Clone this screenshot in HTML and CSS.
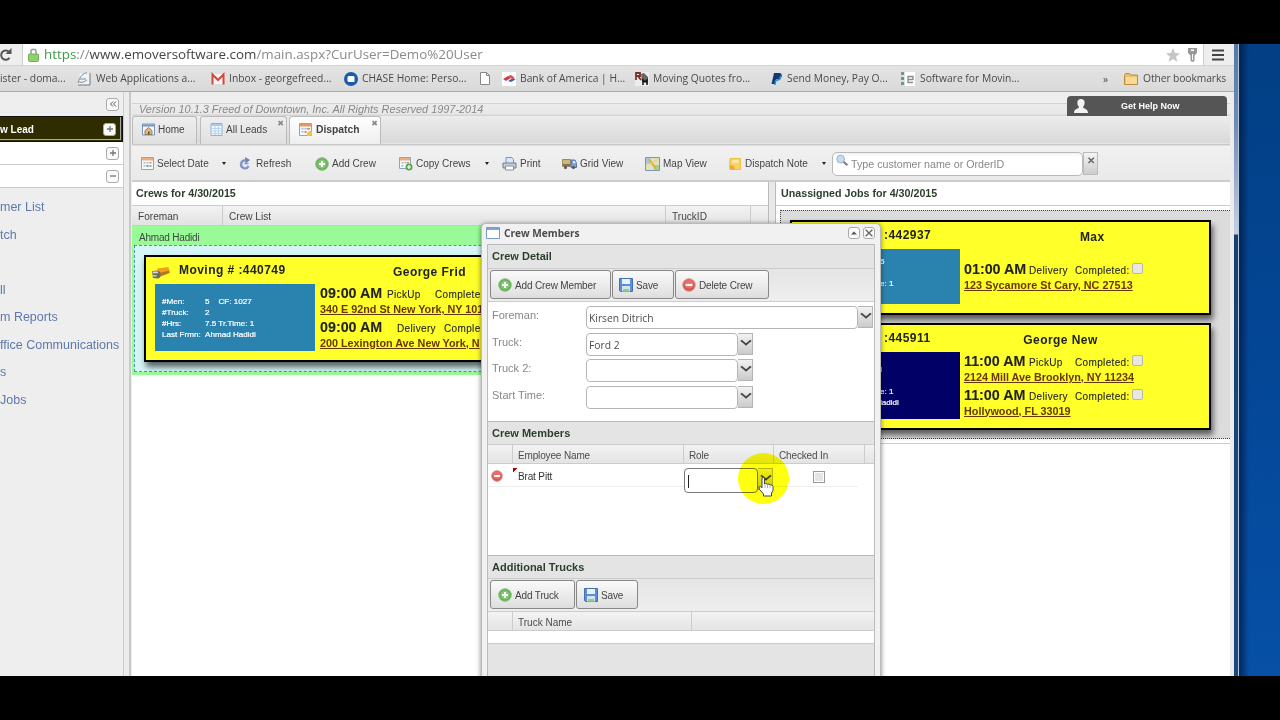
FILE: index.html
```html
<!DOCTYPE html>
<html>
<head>
	<meta charset="utf-8">
	<title>Dispatch</title>
	<link rel="stylesheet" href="styles.css">
</head>
<body>
<svg class="symbols">
	<symbol id="i-plus" viewBox="0 0 14 14"><circle cx="7" cy="7" r="6.3" fill="#62ad54" stroke="#8fc386"/><circle cx="7" cy="7" r="4.6" fill="#82c873"/><path d="M7 4v6M4 7h6" stroke="#fff" stroke-width="2"/></symbol>
	<symbol id="i-minus" viewBox="0 0 14 14"><circle cx="7" cy="7" r="6.3" fill="#d9534c" stroke="#e39a95"/><circle cx="7" cy="6" r="4.6" fill="#e5706a"/><path d="M3.6 7h6.8" stroke="#fff" stroke-width="2.2"/></symbol>
	<symbol id="i-disk" viewBox="0 0 14 14"><path d="M.5.5h13v13h-12l-1-1z" fill="#5d8fd6" stroke="#456fae"/><path d="M3 1h8v5H3z" fill="#e9f1fb"/><path d="M3 8h8v5.5H3z" fill="#d3e3f5"/><path d="M4 11h6v2H4z" fill="#8fd07c"/></symbol>
	<symbol id="i-cal" viewBox="0 0 13 13"><path d="M.5.5h12v12H.5z" fill="#f6f9fc" stroke="#8aa6c6"/><path d="M1 1h11v2.500H1z" fill="#e9ad7c"/><path d="M2.500 5h2v1.500h-2zM5.500 5h2v1.500h-2zM2.500 8h2v1.500h-2z" fill="#a3bad4"/><path d="M8.500 5h2v1.500h-2z" fill="#e08752"/><path d="M5.500 8h2v2h-2z" fill="#6aa963"/><path d="M8.500 8h2v2h-2z" fill="#8fb0d4"/></symbol>
	<symbol id="i-calplus" viewBox="0 0 14 14"><path d="M.5.5h11v11H.5z" fill="#f6f9fc" stroke="#8aa6c6"/><path d="M1 1h10v2.500H1z" fill="#e9ad7c"/><path d="M2.500 5h2v1.500h-2zM2.500 8h2v1.500h-2zM5.500 5h2v1.500h-2z" fill="#a3bad4"/><path d="M8 5h2v1.500H8z" fill="#e08752"/><circle cx="10" cy="10" r="3.500" fill="#58a64b"/><path d="M10 8v4M8 10h4" stroke="#fff" stroke-width="1.200"/></symbol>
	<symbol id="i-caledit" viewBox="0 0 13 13"><path d="M.5.5h12v12H.5z" fill="#f6f9fc" stroke="#8aa6c6"/><path d="M1 1h11v2.500H1z" fill="#e9965c"/><path d="M2.500 5h2v1.500h-2zM5.500 5h2v1.500h-2zM2.500 8h2v1.500h-2z" fill="#a3bad4"/><path d="M5.500 8h2v2h-2zM8 5h3v1.500H8z" fill="#d98a5a"/><path d="M8 10l2-2h3v4l-2 1H8z" fill="#f2c14c"/></symbol>
	<symbol id="i-home" viewBox="0 0 13 12"><path d="M.5.500h12v11H.5z" fill="#f4f6f9" stroke="#7a94b8"/><path d="M1 1h11v2H1z" fill="#7794bd"/><path d="M3 7l3.500-3L10 7v4H3z" fill="#d8b98b" stroke="#8a6a3f" stroke-width=".8"/><path d="M6 8h1.500v3H6z" fill="#5f4b30"/></symbol>
	<symbol id="i-table" viewBox="0 0 12 13"><path d="M.5.500h11v12H.5z" fill="#f3f8fd" stroke="#8fb0d6"/><path d="M1 1h10v2H1z" fill="#a9c8e8"/><path d="M1 5.500h10M1 8h10M1 10.500h10M4.500 1v11M8 1v11" stroke="#b5cfe8" stroke-width=".9"/></symbol>
	<symbol id="i-refresh" viewBox="0 0 12 13"><path d="M9.500 9A3.900 3.900 0 1 1 6.500 3.500" fill="none" stroke="#8595cb" stroke-width="2.400"/><path d="M6 0l5 3-4.500 3.500z" fill="#6b80bf"/><path d="M5.500 6.500h4" stroke="#8595cb" stroke-width="1.500"/></symbol>
	<symbol id="i-print" viewBox="0 0 15 14"><path d="M4 .5h6l1.500 2V7H4z" fill="#d9e9f8" stroke="#7698bd"/><path d="M1 6h13v5H1z" fill="#c9cdd5" stroke="#707b8c"/><path d="M3.500 9h8v4h-8z" fill="#fff" stroke="#8290a3"/></symbol>
	<symbol id="i-truck" viewBox="0 0 15 12"><path d="M.5 1.500h8v7h-8z" fill="#d0b777" stroke="#9c8a5f"/><path d="M1 6h7v2H1z" fill="#7d7262"/><path d="M9 2h4l1.500 3.500v4H9z" fill="#7d9fd2" stroke="#5674a8"/><path d="M11 3h2l.8 2.200H11z" fill="#dce9f7"/><circle cx="3.500" cy="9.500" r="1.500" fill="#555"/><circle cx="11.500" cy="9.500" r="1.500" fill="#555"/></symbol>
	<symbol id="i-map" viewBox="0 0 15 14"><path d="M.5.500h14v13H.5z" fill="#dfe3bd" stroke="#7a97b8"/><path d="M1 1h4v6H1z" fill="#a9c8de"/><path d="M9 8h5v5H9z" fill="#abcf8d"/><path d="M4 2l7 10" stroke="#e8ac2c" stroke-width="2"/><path d="M13 2L7 6" stroke="#e9d27a" stroke-width="1.500"/></symbol>
	<symbol id="i-note" viewBox="0 0 12 12"><path d="M1 .5h10.500v11H1l-.5-3z" fill="#f8d264" stroke="#ecc04a"/><path d="M1 7l4 1 1 3.500H1z" fill="#f0a93d"/><path d="M3 2h7v3H3z" fill="#fbe69c"/></symbol>
	<symbol id="i-search" viewBox="0 0 13 13"><circle cx="5" cy="5" r="4.200" fill="#c4dcf4" stroke="#92add0"/><path d="M8.300 8l4 3.500" stroke="#8b7e88" stroke-width="2.200"/></symbol>
	<symbol id="i-van" viewBox="0 0 18 13"><path d="M5 2.500L16.500 1l1 5.500L8 9z" fill="#f2a01e"/><path d="M7.500 7l9.800-2.500.2 2.500L8.500 10.500z" fill="#b87420"/><path d="M0 5l6-.5 2.500 2V11l-2 1.500L1 12z" fill="#6c6a5a"/><path d="M.5 5.500h5l.8 1.800H1z" fill="#d6dbe0"/><path d="M1 9h3.500v1.500H1z" fill="#c9ccc4"/></symbol>
</svg>
<div class="screen">
	<div class="browser">
		<div class="address_bar">
			<svg class="reload" viewBox="0 0 13 14"><path d="M9.500 9.800A4.600 4.600 0 1 1 9 3.800" fill="none" stroke="#555" stroke-width="2"/><path d="M11.500 0v6H5.500z" fill="#555"/></svg>
			<div class="url_box">
				<svg class="lock" viewBox="0 0 11 14"><path d="M3 7V3.800a2.500 2.500 0 0 1 5 0V7" fill="none" stroke="#9aa399" stroke-width="1.600"/><rect x=".5" y="6" width="10" height="7.500" rx="1" fill="#8fcf6c" stroke="#76ad58"/></svg>
				<span class="url"><i class="secure">https</i>://<b>www.emoversoftware.com</b>/main.aspx?CurUser=Demo%20User</span>
				<svg class="star" viewBox="0 0 14 14"><path d="M7 0l2 5 5 .3-4 3.400 1.400 5.300L7 11l-4.400 3L4 8.700 0 5.300 5 5z" fill="#c6c6c6"/></svg>
				<svg class="key" viewBox="0 0 9 14"><path d="M0 0h9v5L6.500 7.500V13l-2 1-2-1V7.500L0 5z" fill="#999"/><path d="M3 1.500h3v1.500H3zM4 6h1v6H4z" fill="#fff"/></svg>
			</div>
			<svg class="menu" viewBox="0 0 12 12"><path d="M0 1.500h12M0 6h12M0 10.500h12" stroke="#444" stroke-width="2"/></svg>
		</div>
		<div class="bookmarks">
			<div class="bm bm_register"><span>ister - doma...</span></div>
			<div class="bm bm_web"><svg class="bm_icon" viewBox="0 0 14 14"><path d="M3 1h10v12H1" fill="#f2f2f2"/><path d="M13 1v12H1" fill="none" stroke="#777"/><path d="M1 11C3 4 6 1 10 1M3 7h6M2 10c3 1 5 0 8-2" fill="none" stroke="#7892a8"/></svg><span>Web Applications a...</span></div>
			<div class="bm bm_inbox"><svg class="bm_icon" viewBox="0 0 14 14"><path d="M1.500 2v10h11V2z" fill="#f6f6f6"/><path d="M1.500 12.500V2.500L7 8l5.500-5.500v10" fill="none" stroke="#d1493e" stroke-width="2"/></svg><span>Inbox - georgefreed...</span></div>
			<div class="bm bm_chase"><svg class="bm_icon" viewBox="0 0 14 14"><circle cx="7" cy="7" r="7" fill="#1c5ba5"/><path d="M4.500 4h5l1 1v5H4.500L3.500 9V5z" fill="#fff"/></svg><span>CHASE Home: Perso...</span></div>
			<div class="bm bm_page"><svg viewBox="0 0 10 13"><path d="M.5.500h6l3 3v9h-9z" fill="#fff" stroke="#888"/><path d="M6.500.500v3h3" fill="none" stroke="#888"/></svg></div>
			<div class="bm bm_boa"><svg class="bm_icon" viewBox="0 0 14 14"><path d="M0 0h14v14H0z" fill="#fff"/><path d="M1 7l5-3 3 2-5 3z" fill="#d23a45"/><path d="M6 9l5-3 2.500 1.500L9 10z" fill="#3b62a8"/><path d="M6 4l3-1 4 3-3 1z" fill="#d9505a"/></svg><span>Bank of America | H...</span></div>
			<div class="bm bm_quotes"><svg class="bm_icon" viewBox="0 0 14 14"><path d="M0 0h14v14H0z" fill="#eee"/><path d="M1 8V1h4v3H1M3 4l3 4" fill="none" stroke="#7c3324" stroke-width="1.800"/><path d="M6 2l3-1 4 4v7l-2-2H7z" fill="#666"/><path d="M8 13V8l2 2 2-2v5" fill="none" stroke="#111" stroke-width="1.500"/></svg><span>Moving Quotes fro...</span></div>
			<div class="bm bm_paypal"><svg class="bm_icon" viewBox="0 0 14 14"><path d="M4 1h6c4 2 1 7-4 6.500L5 12H1.500z" fill="#17386f"/><path d="M10 3c3 3 0 6-3.500 6L5.500 13H4l1-5c3 0 5-2 5-5z" fill="#2d8cc9"/></svg><span>Send Money, Pay O...</span></div>
			<div class="bm bm_soft"><svg class="bm_icon" viewBox="0 0 14 14"><path d="M4 0h10v14H4z" fill="#fff"/><path d="M1.500 0v14" stroke="#6b9b83" stroke-width="3" stroke-dasharray="3 2"/><path d="M6.500 7.500h5.500V4.500H7v6h5" fill="none" stroke="#8a8a8a" stroke-width="1.300"/></svg><span>Software for Movin...</span></div>
			<div class="bm bm_more">»</div>
			<div class="bm bm_other"><svg class="bm_icon" viewBox="0 0 14 14"><path d="M.5 3.500l1-2h4l1 1.500h7v9.500H.5z" fill="#f0bf69" stroke="#bc8b3e"/><path d="M2 5h11v7H2z" fill="#fbd996"/></svg><span>Other bookmarks</span></div>
		</div>
		<div class="page">
			<div class="sidebar">
				<div class="side_top"><span class="tool_btn"><svg viewBox="0 0 8 8"><path d="M4 1.500L1.500 4 4 6.500M7 1.500L4.500 4 7 6.500" fill="none" stroke="#555"/></svg></span></div>
				<div class="side_lead"><span>w Lead</span><span class="tool_btn"><svg viewBox="0 0 8 8"><path d="M4 1v6M1 4h6" stroke="#777" stroke-width="1.300"/></svg></span></div>
				<div class="side_row"><span class="tool_btn"><svg viewBox="0 0 8 8"><path d="M4 1v6M1 4h6" stroke="#777" stroke-width="1.300"/></svg></span></div>
				<div class="side_row"><span class="tool_btn"><svg viewBox="0 0 8 8"><path d="M1 4h6" stroke="#777" stroke-width="1.300"/></svg></span></div>
				<ul class="side_links">
					<li>mer List</li>
					<li>tch</li>
					<li></li>
					<li>ll</li>
					<li>m Reports</li>
					<li>ffice Communications</li>
					<li>s</li>
					<li>Jobs</li>
				</ul>
			</div>
			<div class="main">
				<div class="version_row">
					<span class="version">Version 10.1.3 Freed of Downtown, Inc. All Rights Reserved 1997-2014</span>
					<div class="help"><svg viewBox="0 0 14 14"><path d="M7 0c5 0 4 6 2 8 0 2 5 1 5 6H0c0-5 5-4 5-6C3 6 2 0 7 0z" fill="#f2f2f2"/></svg><span>Get Help Now</span></div>
				</div>
				<div class="tabs">
					<div class="tab tab_home"><svg><use href="#i-home"/></svg><span>Home</span></div>
					<div class="tab tab_leads"><svg><use href="#i-table"/></svg><span>All Leads</span><em class="tab_close">✖</em></div>
					<div class="tab tab_dispatch active"><svg><use href="#i-caledit"/></svg><span>Dispatch</span><em class="tab_close">✖</em></div>
				</div>
				<div class="toolbar">
					<div class="tool t_date"><svg><use href="#i-cal"/></svg><span>Select Date</span></div><i class="arrow"></i>
					<div class="tool t_refresh"><svg><use href="#i-refresh"/></svg><span>Refresh</span></div>
					<div class="tool t_add"><svg><use href="#i-plus"/></svg><span>Add Crew</span></div>
					<div class="tool t_copy"><svg><use href="#i-calplus"/></svg><span>Copy Crews</span></div><i class="arrow"></i>
					<div class="tool t_print"><svg><use href="#i-print"/></svg><span>Print</span></div>
					<div class="tool t_grid"><svg><use href="#i-truck"/></svg><span>Grid View</span></div>
					<div class="tool t_map"><svg><use href="#i-map"/></svg><span>Map View</span></div>
					<div class="tool t_note"><svg><use href="#i-note"/></svg><span>Dispatch Note</span></div><i class="arrow"></i>
					<div class="search"><svg><use href="#i-search"/></svg><span>Type customer name or OrderID</span></div>
					<div class="search_clear">✕</div>
				</div>
				<div class="panels">
					<div class="crews">
						<div class="panel_title">Crews for 4/30/2015</div>
						<div class="grid_head"><span class="c_foreman">Foreman</span><span class="c_list">Crew List</span><span class="c_truck">TruckID</span></div>
						<div class="crew_row">
							<div class="crew_name">Ahmad Hadidi</div>
							<div class="crew_drop">
								<div class="card">
									<div class="card_head"><svg class="van"><use href="#i-van"/></svg><span class="card_no">Moving # :440749</span><span class="card_name n_frid">George Frid</span></div>
									<div class="card_body">
										<table class="info">
											<tr><td>#Men:</td><td>5 &nbsp;&nbsp; CF: 1027</td></tr>
											<tr><td>#Truck:</td><td>2</td></tr>
											<tr><td>#Hrs:</td><td>7.5 Tr.Time: 1</td></tr>
											<tr><td>Last Frmn:</td><td>Ahmad Hadidi</td></tr>
										</table>
										<div class="stops">
											<div class="stop"><b>09:00 AM</b><span class="kind">PickUp</span><span>Complete</span></div>
											<a>340 E 92nd St New York, NY 101</a>
											<div class="stop"><b>09:00 AM</b><span class="kind k_wide">Delivery</span><span>Comple</span></div>
											<a>200 Lexington Ave New York, N</a>
										</div>
									</div>
								</div>
							</div>
						</div>
					</div>
					<div class="jobs">
						<div class="panel_title">Unassigned Jobs for 4/30/2015</div>
						<div class="jobs_drop">
							<div class="card short">
								<div class="card_head"><span class="card_no">:442937</span><span class="card_name n_max">Max</span></div>
								<div class="card_body">
									<table class="info">
										<tr><td></td><td class="cut">5</td></tr>
										<tr><td></td><td>&nbsp;</td></tr>
										<tr><td></td><td class="cut">e: 1</td></tr>
									</table>
									<div class="stops">
										<div class="stop"><b>01:00 AM</b><span class="kind">Delivery</span><span>Completed:</span><i class="check"></i></div>
										<a>123 Sycamore St Cary, NC 27513</a>
									</div>
								</div>
							</div>
							<div class="card">
								<div class="card_head"><span class="card_no">:445911</span><span class="card_name n_new">George New</span></div>
								<div class="card_body">
									<table class="info navy">
										<tr><td></td><td class="cut">l</td></tr>
										<tr><td></td><td>&nbsp;</td></tr>
										<tr><td></td><td class="cut">e: 1</td></tr>
										<tr><td></td><td class="cut">ladidi</td></tr>
									</table>
									<div class="stops">
										<div class="stop"><b>11:00 AM</b><span class="kind">PickUp</span><span>Completed:</span><i class="check"></i></div>
										<a>2124 Mill Ave Brooklyn, NY 11234</a>
										<div class="stop"><b>11:00 AM</b><span class="kind">Delivery</span><span>Completed:</span><i class="check"></i></div>
										<a>Hollywood, FL 33019</a>
									</div>
								</div>
							</div>
						</div>
						<div class="jobs_end"></div>
					</div>
				</div>
			</div>
		</div>
	</div>
	<div class="window_edge"></div>
	<div class="desktop"></div>

	<div class="dialog">
		<div class="dialog_title">
			<svg class="win_icon" viewBox="0 0 14 12"><path d="M.5.500h13v11H.5z" fill="#fff" stroke="#7b9cc9"/><path d="M1 1h12v2H1z" fill="#7ea4d8"/></svg>
			<span>Crew Members</span>
			<i class="tool_btn"><svg viewBox="0 0 8 8"><path d="M1 5.500l3-3 3 3z" fill="#555"/></svg></i>
			<i class="tool_btn"><svg viewBox="0 0 8 8"><path d="M.7.700l6.600 6.600M7.300.700L.7 7.300" stroke="#666" stroke-width="1.400"/></svg></i>
		</div>
		<div class="dialog_body">
			<div class="section_title">Crew Detail</div>
			<div class="buttons">
				<button class="b_member"><svg><use href="#i-plus"/></svg>Add Crew Member</button>
				<button class="b_save"><svg><use href="#i-disk"/></svg>Save</button>
				<button class="b_delete"><svg><use href="#i-minus"/></svg>Delete Crew</button>
			</div>
			<div class="form">
				<div class="field"><label>Foreman:</label><div class="combo wide"><span>Kirsen Ditrich</span><i class="trigger"></i></div></div>
				<div class="field"><label>Truck:</label><div class="combo"><span>Ford 2</span><i class="trigger"></i></div></div>
				<div class="field"><label>Truck 2:</label><div class="combo"><span></span><i class="trigger"></i></div></div>
				<div class="field"><label>Start Time:</label><div class="combo"><span></span><i class="trigger"></i></div></div>
			</div>
			<div class="section_title line_top">Crew Members</div>
			<div class="members_head"><span></span><span>Employee Name</span><span>Role</span><span>Checked In</span><span></span></div>
			<div class="members">
				<div class="member_row">
					<svg class="remove"><use href="#i-minus"/></svg>
					<span class="dirty">Brat Pitt</span>
					<div class="combo role"><span class="caret"></span><i class="trigger"></i></div>
					<i class="checkbox"></i>
				</div>
			</div>
			<div class="section_title line_top">Additional Trucks</div>
			<div class="buttons">
				<button class="b_truck"><svg><use href="#i-plus"/></svg>Add Truck</button>
				<button class="b_save2"><svg><use href="#i-disk"/></svg>Save</button>
			</div>
			<div class="trucks_head"><span></span><span>Truck Name</span><span></span></div>
			<div class="trucks"></div>
		</div>
		<div class="click_spot"></div>
		<svg class="pointer" viewBox="0 0 16 20"><path d="M4 1c1-1 2.500-.5 2.500 1v5l1-.5 2 .7 1.500-.2 1.500 1 1.500 0 1 1.500v4L13.500 16v3h-8v-2L1.500 12.500 .8 10l1.500-.5L4 11z" fill="#fff" stroke="#444" stroke-width="1"/><path d="M7 7.500V11M9.500 8v3M12 8.500V11" stroke="#999" stroke-width=".8"/></svg>
	</div>
</div>
</body>
</html>
```
FILE: styles.css
```css
html, body{
	margin:0;
	padding:0;
	background:#000;
	overflow:hidden;
}
body{
	font-family:"Liberation Sans", Arial, sans-serif;
	font-size:11px;
	color:#444;
	padding:44px 0;
}
*{
	box-sizing:border-box;
}
svg{
	flex:none;
	display:block;
}
.symbols{
	display:none;
}
.screen{
	position:relative;
	display:flex;
	width:1280px;
	height:632px;
	overflow:hidden;
	white-space:nowrap;
}
.browser{
	width:1234px;
	display:flex;
	flex-direction:column;
	background:#ececec;
}
.window_edge{
	width:6px;
	background:linear-gradient(90deg, transparent 4px, #b7c8dc 4px, #b7c8dc 5px, #082a57 5px), linear-gradient(#5877a6, #6f8bb5 80px, #c3d0e2 190px, #17406f 191px, #1c4a80);
}
.desktop{
	flex:1;
	background:linear-gradient(90deg, rgba(0,15,50,.55), rgba(0,15,50,0) 9px), linear-gradient(#023f84, #04489a 60%, #0650a6);
}

/* browser chrome */
.address_bar{
	height:21px;
	display:flex;
	align-items:center;
	background:#eee;
}
.reload{
	width:13px;
	height:14px;
	margin-right:9px;
}
.url_box{
	width:1182px;
	height:21px;
	display:flex;
	align-items:center;
	background:#fff;
	border-left:1px solid #ccc;
	border-right:1px solid #ccc;
	padding-left:5px;
}
.lock{
	width:11px;
	height:14px;
}
.url{
	margin-left:5px;
	margin-top:-1px;
	font:13.370px "Open Sans", sans-serif;
	color:#8a8a8a;
}
.url b{
	font-weight:normal;
	color:#444;
}
.url .secure{
	font-style:normal;
	color:#3f9a4a;
}
.star{
	width:14px;
	height:14px;
	margin-left:auto;
	margin-right:8px;
}
.key{
	width:9px;
	height:14px;
	margin-right:6px;
}
.menu{
	width:12px;
	height:12px;
	margin-left:8px;
}
.bookmarks{
	height:27px;
	display:flex;
	align-items:center;
	background:linear-gradient(#e3e3e3, #dadada);
	border-top:1px solid #d4d4d4;
	border-bottom:1px solid #aaa;
	font:10.300px "Open Sans", sans-serif;
	color:#4a4a4a;
}
.bm{
	display:flex;
	align-items:center;
	flex:none;
}
.bm span{
	margin-top:-1px;
}
.bm_icon{
	width:14px;
	height:14px;
	margin-right:4px;
}
.bm_register{ width:77px; }
.bm_web{ width:134px; }
.bm_inbox{ width:133px; }
.bm_chase{ width:136px; }
.bm_page{ width:22px; }
.bm_page svg{
	width:10px;
	height:13px;
}
.bm_boa{ width:133px; }
.bm_quotes{ width:135px; }
.bm_paypal{ width:131px; }
.bm_paypal .bm_icon{ margin-right:3px; }
.bm_soft{ width:202px; }
.bm_more{ width:21px; }
.bm_web .bm_icon, .bm_soft .bm_icon{ margin-right:5px; }
.bm_other{ letter-spacing:-.1px; }
.bm_other .bm_icon{ margin-right:5px; }

.page{
	flex:1;
	display:flex;
}

/* sidebar */
.sidebar{
	width:124px;
	border-right:1px solid #ccc;
	background:#eee;
	overflow:hidden;
}
.tool_btn{
	display:inline-flex;
	align-items:center;
	justify-content:center;
	width:13px;
	height:13px;
	border:1px solid #aaa;
	border-radius:3px;
	background:#fafafa;
}
.tool_btn svg{
	width:8px;
	height:8px;
}
.side_top{
	height:24px;
	display:flex;
	align-items:center;
	justify-content:flex-end;
	padding-right:4px;
}
.side_lead{
	height:26px;
	display:flex;
	align-items:center;
	justify-content:space-between;
	background:#2f2c00;
	border:1px solid #111;
	border-left:0;
	box-shadow:inset -1px -1px #2f2c00, inset -2px -2px #aaa;
	color:#fff;
	font-weight:bold;
	font-size:10px;
	padding-right:6px;
}
.side_row{
	height:23px;
	display:flex;
	align-items:center;
	justify-content:flex-end;
	background:#fff;
	border-bottom:1px solid #ccc;
	padding-right:4px;
}
.side_links{
	margin:0;
	padding:6px 0 0;
	list-style:none;
	font-size:12.500px;
	color:#5d79ab;
}
.side_links li{
	height:27.500px;
	line-height:27.500px;
}

/* main area */
.main{
	width:1101px;
	margin-left:5px;
	margin-right:3px;
	border-left:2px solid #c9c9c9;
	padding-left:1px;
	display:flex;
	flex-direction:column;
}
.version_row{
	height:24px;
	display:flex;
	justify-content:space-between;
	align-items:flex-end;
	background:linear-gradient(#eee 11px, #d2d2d2 11px, #d2d2d2 12px, #ececec 12px, #e8e8e8 22px, #d5d5d5 23px);
}
.version{
	font-size:10.900px;
	font-style:italic;
	color:#888;
	line-height:13px;
	margin-left:7px;
}
.help{
	width:160px;
	height:20px;
	margin-right:3px;
	background:#555;
	border-radius:4px 4px 0 0;
	display:flex;
	align-items:center;
	padding-left:7px;
	color:#fff;
	font-weight:bold;
	font-size:9px;
}
.help svg{
	width:14px;
	height:14px;
	margin-right:33px;
}
.tabs{
	height:30px;
	display:flex;
	align-items:flex-start;
	background:linear-gradient(#ececec, #d9d9d9 27px, #f0f0f0 28px, #c8c8c8 28px, #c8c8c8 29px, #f5f5f5 30px);
}
.tab{
	position:relative;
	height:28px;
	display:flex;
	align-items:center;
	border:1px solid #bbb;
	border-bottom:0;
	border-radius:3px 3px 0 0;
	background:linear-gradient(#eee, #e0e0e0);
	font-size:10px;
	padding:0 0 2px 9px;
	margin-right:3px;
}
.tab svg{
	width:13px;
	height:13px;
	margin-right:3px;
}
.tab_home{ width:65px; }
.tab_leads{ width:87px; margin-right:2px; }
.tab_dispatch{ width:92px; }
.tab.active{
	background:linear-gradient(#fff, #eee);
	font-weight:bold;
	font-size:10.300px;
}
.tab.active svg{
	margin-right:4px;
}
.tab_close{
	position:absolute;
	top:2px;
	right:2px;
	font:8px "DejaVu Sans", sans-serif;
	color:#888;
}
.toolbar{
	height:36px;
	display:flex;
	align-items:center;
	padding:1px 0 0 9px;
	background:linear-gradient(#f1f1f1, #e9e9e9);
	border-bottom:2px solid #ccc;
	font-size:10px;
}
.tool{
	display:flex;
	align-items:center;
}
.tool svg{
	width:14px;
	height:14px;
	margin-right:3px;
}
.t_date{ width:81px; }
.t_refresh{ width:76px; letter-spacing:.05px; }
.t_add{ width:84px; }
.t_copy{ width:86px; }
.t_print{ width:60px; }
.t_grid{ width:83px; }
.t_map{ width:84px; }
.t_note{ width:93px; }
.t_date svg{ width:13px; height:13px; }
.t_refresh svg{ width:12px; height:13px; margin-right:5px; }
.t_print svg, .t_grid svg, .t_map svg{ width:15px; }
.t_note svg{ width:12px; height:12px; margin-right:4px; }
.arrow{
	width:0;
	height:0;
	border:2.500px solid transparent;
	border-top:3px solid #222;
	border-bottom:0;
	margin-right:13px;
}
.arrow:nth-last-of-type(1){
	margin-right:6px;
}
.search{
	width:251px;
	height:24px;
	display:flex;
	align-items:center;
	background:linear-gradient(#f2f2f2, #fff 4px);
	border:1px solid #b9b9b9;
	border-radius:5px;
	font-size:10.700px;
	color:#888;
	padding-left:3px;
}
.search svg{
	width:12px;
	height:13px;
	margin:-6px 3px 0 0;
}
.search_clear{
	width:15px;
	height:23px;
	line-height:16px;
	text-align:center;
	border:1px solid #bbb;
	background:linear-gradient(#f4f4f4, #ccc);
	font-size:10px;
	font-weight:bold;
	color:#666;
}
.panels{
	flex:1;
	display:flex;
	justify-content:space-between;
	background:#e8e8e8;
}
.crews{
	width:637px;
	background:#fff;
	border-right:1px solid #bbb;
}
.jobs{
	width:455px;
	background:#fff;
	border-left:1px solid #bbb;
}
.panel_title{
	height:24px;
	line-height:22px;
	padding-left:4px;
	font-size:10.700px;
	font-weight:bold;
	color:#2c3f2c;
	border-bottom:1px solid #ccc;
}
.jobs .panel_title{
	padding-left:5px;
}
.grid_head{
	display:flex;
	height:20px;
	line-height:22px;
	background:linear-gradient(#f3f3f3, #e2e2e2);
	border-bottom:1px solid #ccc;
	font-size:10.100px;
}
.grid_head span{
	padding-left:6px;
	border-right:1px solid #ccc;
	height:19px;
}
.c_foreman{ width:91px; }
.c_list{ width:443px; }
.c_truck{ width:85px; }
.crew_row{
	height:149px;
	background:#98fb98;
	padding:1px 2px 3px;
}
.crew_name{
	height:18px;
	line-height:21px;
	padding-left:5px;
	font-size:10px;
	letter-spacing:-.2px;
}
.crew_drop{
	height:127px;
	border:1px dashed #4a9a9a;
	background:#d6f5f7;
	padding:9px 0 0 9px;
}
.card{
	width:421px;
	height:107px;
	border:2px solid #000;
	background:#ffff2a;
	box-shadow:2px 5px 6px rgba(0,0,0,.6);
	color:#222;
}
.card.short{
	height:95px;
	margin-bottom:8px;
}
.card_head{
	height:27px;
	display:flex;
	font-size:12px;
	font-weight:bold;
	letter-spacing:.45px;
}
.van{
	width:18px;
	height:13px;
	margin:9px 9px 0 6px;
}
.card_no{
	width:157px;
	line-height:26px;
}
.jobs .card_no{
	width:98px;
	margin-left:92px;
	line-height:27px;
}
.card_name{
	text-align:center;
	line-height:30px;
}
.jobs .card_name{
	line-height:31px;
}
.n_frid{ width:187px; }
.n_max{ width:250px; }
.n_new{ width:157px; }
.card_body{
	display:flex;
}
.info{
	width:160px;
	height:67px;
	margin-left:9px;
	background:#2a83ae;
	color:#fff;
	font-size:8.100px;
	-webkit-text-stroke:.2px #fff;
	border-spacing:0;
	padding:12px 0 11px 7px;
}
.info td{
	padding:0;
	line-height:11px;
}
.info td:first-child{
	width:43px;
}
.info.navy{
	background:#000066;
}
.info .cut{
	padding-left:30px;
}
.short .info{
	height:55px;
	padding:7px 0 15px 7px;
}
.jobs .info{
	margin-left:8px;
}
.stops{
	margin-left:5px;
	font-size:10px;
}
.jobs .stops{
	margin-left:4px;
}
.short .stops{
	padding-top:11px;
}
.stop{
	display:flex;
	align-items:baseline;
	height:17px;
	line-height:18px;
	letter-spacing:.35px;
	-webkit-text-stroke:.1px #333;
}
.stop b{
	width:65px;
	font-size:14.300px;
	letter-spacing:0;
}
.kind{
	width:46px;
}
.crews .stop b{
	width:67px;
}
.crews .kind{
	width:48px;
}
.crews .k_wide{
	width:57px;
	padding-left:10px;
}
.check{
	width:11px;
	height:11px;
	margin-left:2px;
	align-self:center;
	background:#e8e8e0;
	border:1px solid #b9b9a0;
	border-radius:2px;
}
.stops a{
	display:block;
	height:16.500px;
	line-height:16px;
	font-size:10.800px;
	font-weight:bold;
	color:#6b3500;
	text-decoration:underline;
}
.short .stops a{
	letter-spacing:.05px;
}
.jobs_drop{
	height:229px;
	margin:4px 0 0 4px;
	padding:9px;
	border:1px dotted #444;
	border-right:0;
	background:#dcdcdc;
}
.jobs_end{
	height:5px;
	border-bottom:1px solid #ccc;
}

/* crew dialog, floats over the panels */
.dialog{
	position:absolute;
	left:481px;
	top:179px;
	width:400px;
	height:460px;
	padding:0 5px;
	border:1px solid #bbb;
	border-radius:5px;
	background:#f1f1f1;
	box-shadow:0 1px 5px rgba(0,0,0,.5);
	color:#4c4c4c;
}
.dialog_title{
	height:20px;
	display:flex;
	align-items:center;
	padding-bottom:2px;
	font:bold 10.100px "Open Sans", sans-serif;
}
.win_icon{
	width:14px;
	height:12px;
	margin:0 4px 0 -1px;
}
.dialog_title span{
	flex:1;
}
.dialog_title .tool_btn{
	width:12px;
	height:12px;
	margin-left:3px;
}
.dialog_body{
	height:440px;
	border:1px solid #bbb;
	background:#e4e4e4;
}
.section_title{
	height:24px;
	line-height:23px;
	padding-left:4px;
	font-size:11px;
	font-weight:bold;
	color:#2c3f2c;
	background:#e4e4e4;
	border-bottom:1px solid #ccc;
}
.line_top{
	border-top:1px solid #bbb;
}
.buttons{
	height:33px;
	display:flex;
	gap:1px;
	padding:1px 2px 0;
	background:linear-gradient(#e5e5e5, #eee);
	border-bottom:1px solid #ccc;
}
button{
	height:29px;
	display:flex;
	align-items:center;
	padding:1px 0 0 7px;
	border:1px solid #888;
	border-radius:3px;
	background:linear-gradient(#fafafa, #dedede);
	font:10px "Liberation Sans", Arial, sans-serif;
	letter-spacing:-.15px;
	color:#444;
}
button svg{
	width:14px;
	height:14px;
	margin-right:3px;
}
.b_member{ width:121px; }
.b_save{ width:62px; }
.b_delete{ width:94px; }
.b_truck{ width:85px; }
.b_save2{ width:62px; }
.b_save svg{ margin-left:-1px; }
.b_delete svg{ margin-left:-1px; }
.form{
	height:119px;
	padding:4px 0 0 4px;
	background:#fff;
}
.field{
	display:flex;
	height:26.700px;
}
.field label{
	width:94px;
	line-height:18px;
	color:#888;
}
.combo{
	width:167px;
	height:23px;
	display:flex;
	font:10.300px "Open Sans", sans-serif;
}
.combo.wide{
	width:287px;
}
.combo span{
	flex:1;
	line-height:22px;
	padding-left:2px;
	background:#fff;
	border:1px solid #b5b5b5;
	border-radius:4px;
}
.trigger{
	width:15px;
	height:22px;
	border:1px solid #b5b5b5;
	border-left:0;
	background:linear-gradient(#f2f2f2, #cacaca);
}
.trigger:before{
	content:'';
	display:block;
	width:6px;
	height:6px;
	margin:3px 0 0 4px;
	border:solid #444;
	border-width:0 2px 2px 0;
	transform:scaleY(.8) rotate(45deg);
}
.members_head, .trucks_head{
	display:grid;
	height:19px;
	line-height:21px;
	background:linear-gradient(#f3f3f3, #e4e4e4);
	border-bottom:1px solid #ccc;
	font-size:10px;
	letter-spacing:-.15px;
}
.members_head{
	grid-template-columns:25px 171px 90px 91px 10px;
}
.trucks_head{
	grid-template-columns:25px 179px 182px;
	letter-spacing:0;
}
.members_head span, .trucks_head span{
	height:18px;
	padding-left:5px;
	border-right:1px solid #ccc;
}
.members_head span:last-child, .trucks_head span:last-child{
	border:0;
}
.members{
	height:91px;
	background:#fff;
}
.member_row{
	display:flex;
	width:370px;
	height:23px;
	border-bottom:1px solid #eee;
	font-size:10px;
}
.remove{
	width:12px;
	height:12px;
	margin:6px 10px 0 3px;
}
.dirty{
	width:171px;
	line-height:25px;
	padding-left:5px;
	letter-spacing:-.15px;
	color:#333;
	background:linear-gradient(135deg, #a00 3px, transparent 3px) 0 4px no-repeat;
}
.combo.role{
	width:89px;
	height:25px;
	margin-top:4px;
}
.role .caret{
	border-color:#777;
	padding-left:3px;
}
.role .caret:before{
	content:'';
	display:block;
	width:1px;
	height:13px;
	margin-top:6px;
	background:#222;
}
.checkbox{
	width:12px;
	height:12px;
	margin:7px 0 0 40px;
	border:1px solid #999;
	background:#e4e4e4;
	box-shadow:inset 0 0 0 1px #fff;
}
.trucks{
	height:13px;
	background:#fff;
	border-bottom:1px solid #ccc;
}
.click_spot{
	position:absolute;
	left:256px;
	top:229px;
	width:51px;
	height:51px;
	border-radius:50%;
	background:#ffff10;
	mix-blend-mode:multiply;
}
.pointer{
	position:absolute;
	left:276px;
	top:253px;
	width:16px;
	height:20px;
}
```
